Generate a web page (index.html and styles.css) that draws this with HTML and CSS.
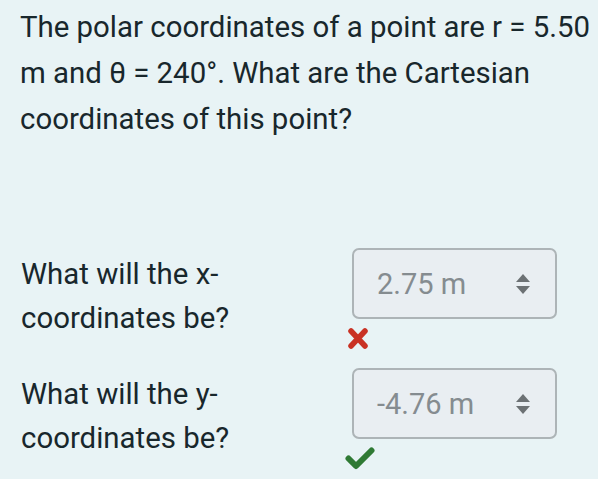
FILE: index.html
```html
<!DOCTYPE html>
<html>
<head>
<meta charset="utf-8">
<link rel="stylesheet" href="styles.css">
</head>
<body>
<p class="question">The polar coordinates of a point are r = 5.50 m and θ = 240°. What are the Cartesian coordinates of this point?</p>
<div class="answers">
  <div class="row">
    <div class="label">What will the x-coordinates be?</div>
    <div class="field">
      <div class="box">
        <span class="value">2.75 m</span>
        <svg class="spin" width="14" height="20" viewBox="0 0 14 20"><path d="M0 8 L7 0 L14 8 Z M0 12 L14 12 L7 20 Z" fill="#6c7174"/></svg>
      </div>
      <div class="mark">
        <svg class="cross" width="22" height="23" viewBox="0 0 22 23"><path d="M4 4 L18 19 M18 4 L4 19" stroke="#c93224" stroke-width="5.5" stroke-linecap="round" fill="none"/></svg>
      </div>
    </div>
  </div>
  <div class="row">
    <div class="label">What will the y-coordinates be?</div>
    <div class="field">
      <div class="box">
        <span class="value">-4.76 m</span>
        <svg class="spin" width="14" height="20" viewBox="0 0 14 20"><path d="M0 8 L7 0 L14 8 Z M0 12 L14 12 L7 20 Z" fill="#6c7174"/></svg>
      </div>
      <div class="mark">
        <svg class="check" width="30" height="23" viewBox="0 0 30 23"><path d="M3.5 11.5 L11 19 L26.5 3.5" stroke="#2f7a34" stroke-width="6" stroke-linecap="round" stroke-linejoin="round" fill="none"/></svg>
      </div>
    </div>
  </div>
</div>
</body>
</html>
```
FILE: styles.css
```css
html, body {
  margin: 0;
  padding: 0;
}
body {
  background: #e8f3f5;
  font-family: Roboto, "Liberation Sans", sans-serif;
  font-size: 29.4px;
  color: #18272c;
}
.question {
  margin: 0;
  padding: 4px 0 0 20px;
  line-height: 46px;
}
.answers {
  margin-top: 106px;
  padding-left: 21px;
}
.row {
  display: grid;
  grid-template-columns: 331px 205px;
  margin-bottom: 11px;
}
.label {
  padding-top: 4px;
  line-height: 44px;
  width: 260px;
}
.box {
  box-sizing: border-box;
  height: 71px;
  border: 2px solid #adb4b7;
  border-radius: 7px;
  background: #e9eef2;
  display: flex;
  align-items: center;
  justify-content: space-between;
  padding: 0 25px 0 23px;
  font-size: 29px;
}
.value {
  color: #858c90;
}
.spin {
  display: block;
}
.mark {
  height: 30px;
  margin-top: 8px;
}
.cross {
  display: block;
  margin-left: -5px;
}
.check {
  display: block;
  margin-left: -7px;
  margin-top: 1px;
}
```
